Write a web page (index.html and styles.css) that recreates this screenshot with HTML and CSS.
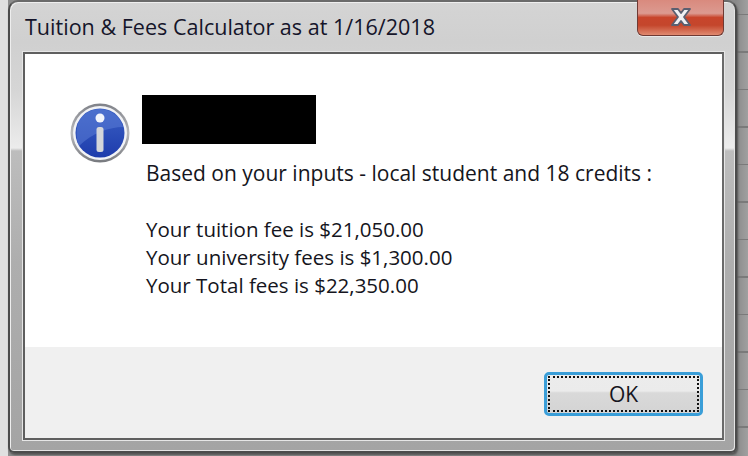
FILE: index.html
```html
<!DOCTYPE html>
<html lang="en">
<head>
    <meta charset="UTF-8">
    <meta name="viewport" content="width=device-width, initial-scale=1.0">
    <title>Tuition &amp; Fees Calculator</title>
    <link rel="stylesheet" href="styles.css">
</head>
<body>

    <div class="desktop">
        <div class="window">
            <div class="titlebar">
                <span class="title">Tuition &amp; Fees Calculator as at 1/16/2018</span>
                <div class="close">
                    <svg width="22" height="20" viewBox="0 0 22 20">
                        <path d="M2 2h6l3 4 3-4h6l-6 8 6 8h-6l-3-4-3 4H2l6-8z" fill="#f0f0f3" stroke="#5a5f70" stroke-width="1.800" stroke-linejoin="round"/>
                    </svg>
                </div>
            </div>

            <div class="client">
                <div class="message">
                    <svg class="info-icon" width="60" height="60" viewBox="0 0 60 60">
                        <defs>
                            <linearGradient id="ring" x1="0" y1="0" x2="0" y2="1">
                                <stop offset="0" stop-color="#7f8188"/>
                                <stop offset="0.5" stop-color="#b8b9bd"/>
                                <stop offset="1" stop-color="#77797e"/>
                            </linearGradient>
                            <linearGradient id="disc" x1="0" y1="0" x2="0" y2="1">
                                <stop offset="0" stop-color="#3a60c4"/>
                                <stop offset="1" stop-color="#1e3cac"/>
                            </linearGradient>
                        </defs>
                        <circle cx="30" cy="30" r="29.500" fill="url(#ring)"/>
                        <circle cx="30" cy="30" r="27" fill="#f2f3f6"/>
                        <circle cx="30" cy="30" r="24.500" fill="url(#disc)"/>
                        <path d="M8 20A24 24 0 0 1 53 24C40 24 22 30 9 43 6 36 6 28 8 20z" fill="#5d80d8" opacity="0.5"/>
                        <circle cx="30" cy="15" r="4.500" fill="#f2f5fc"/>
                        <rect x="26.500" y="24" width="7" height="25" rx="2.500" fill="#d4d6da"/>
                    </svg>
                    <div class="message-body">
                        <div class="redacted"></div>
                        <p class="line intro">Based on your inputs - local student and 18 credits :</p>
                        <p class="line">Your tuition fee is $21,050.00</p>
                        <p class="line">Your university fees is $1,300.00</p>
                        <p class="line">Your Total fees is $22,350.00</p>
                    </div>
                </div>
                <div class="footer">
                    <button type="button" class="ok-button"><span class="ok-focus">OK</span></button>
                </div>
            </div>
        </div>
    </div>

</body>
</html>
```

FILE: styles.css
```css
body {
    margin: 0;
    font-family: "Open Sans", "Noto Sans", sans-serif;
    background-color: #8f8f8f;
}

/* spreadsheet behind the dialog: pale on the left, shaded on the right */
.desktop {
    width: 748px;
    height: 456px;
    box-sizing: border-box;
    overflow: hidden;
    background-color: #8e8e8e;
    background-image:
        linear-gradient(to right, #e0e0e0 0, #e0e0e0 8px, transparent 8px),
        repeating-linear-gradient(to bottom, transparent 0, transparent 36px, #7a7a7a 36px, #7a7a7a 37.500px),
        linear-gradient(to right, #8e8e8e 0, #8a8a8a 736px, #a0a0a0 100%);
    background-position: 0 0, 0 -22px, 0 0;
}

.window {
    position: relative;
    box-sizing: border-box;
    width: 729px;
    height: 453px;
    margin-left: 8px;
    padding: 0 11px 11px 13px;
    display: flex;
    flex-direction: column;
    border: 2px solid #4c4c4c;
    border-top-color: #6a6a6a;
    border-radius: 10px 10px 6px 6px;
    background: linear-gradient(to bottom, #d4d4d4 0, #d0d0d0 40px, #d6d6d6 90px, #ececec 146px, #bdbdbd 149px, #aeaeae 260px, #a4a4a4 100%);
    box-shadow: inset 1px 1px 0 #eeeeee, inset -1px -1px 0 #e4e4e4, 1px 2px 2px #555555;
}

.titlebar {
    height: 50px;
    flex: none;
    display: flex;
    align-items: center;
    padding: 0 0 1px 2px;
    box-sizing: border-box;
}

.title {
    font-size: 21.550px;
    color: #15152a;
}

.close {
    position: absolute;
    top: -2px;
    right: 11px;
    width: 87px;
    height: 36px;
    display: flex;
    align-items: center;
    justify-content: center;
    box-sizing: border-box;
    padding-bottom: 2px;
    border: 1px solid #6f3a34;
    border-top: none;
    border-radius: 0 0 6px 6px;
    background: linear-gradient(to bottom, #d98a7e 0, #dc9a90 38%, #c8452c 50%, #c4462c 72%, #e08a70 100%);
    box-shadow: 0 1px 0 #e8e8e8;
}

.client {
    flex: 1;
    display: flex;
    flex-direction: column;
    border: 2px solid #5f5f5f;
    border-right-color: #6a6a6a;
    background-color: #ffffff;
    box-shadow: 0 0 0 1px #e6e6e6;
}

.message {
    height: 293px;
    flex: none;
    box-sizing: border-box;
    display: flex;
    padding: 41px 0 0 45px;
    background-color: #ffffff;
}

.info-icon {
    flex: none;
    margin-top: 8px;
}

.message-body {
    margin-left: 12px;
}

.redacted {
    width: 174px;
    height: 49px;
    background-color: #000000;
}

.line {
    margin: 0 0 0 4px;
    font-size: 20.500px;
    line-height: 28px;
    color: #151520;
}

.intro {
    font-size: 21px;
    margin-top: 15px;
    margin-bottom: 28px;
}

.footer {
    flex: 1;
    display: flex;
    justify-content: flex-end;
    align-items: flex-start;
    padding: 25px 19px 0 0;
    background-color: #f0f0f0;
}

.ok-button {
    width: 159px;
    height: 44px;
    padding: 1px;
    border: 3px solid #3a9ed8;
    border-radius: 5px;
    background: linear-gradient(to bottom, #ececec 0, #ebebeb 42%, #d9d9d9 47%, #d4d4d4 100%);
    font-family: inherit;
    font-size: 21px;
    color: #151520;
}

.ok-focus {
    display: flex;
    align-items: center;
    justify-content: center;
    height: 100%;
    box-sizing: border-box;
    border: 2px dotted #111111;
}
```
